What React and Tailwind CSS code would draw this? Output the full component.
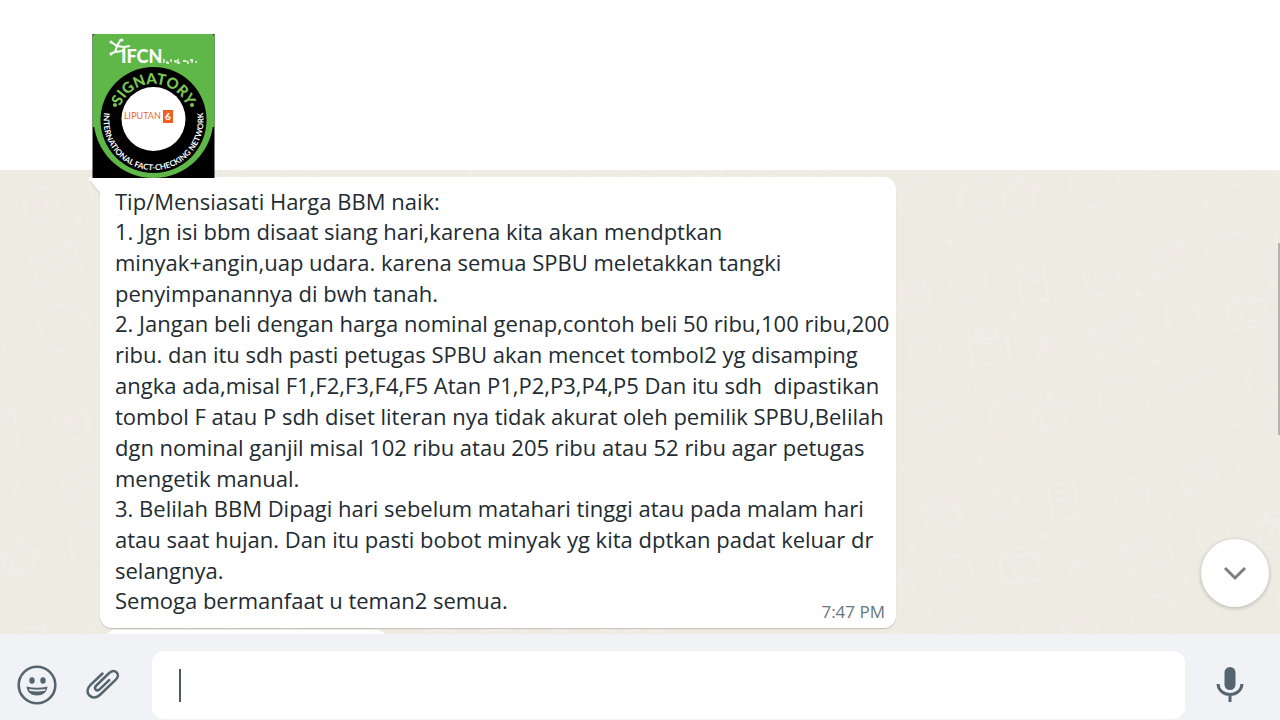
import React from 'react';

const message = [
  ['Tip/Mensiasati Harga BBM naik:'],
  [
    '1. Jgn isi bbm disaat siang hari,karena kita akan mendptkan',
    'minyak+angin,uap udara. karena semua SPBU meletakkan tangki',
    'penyimpanannya di bwh tanah.',
  ],
  [
    '2. Jangan beli dengan harga nominal genap,contoh beli 50 ribu,100 ribu,200',
    'ribu. dan itu sdh pasti petugas SPBU akan mencet tombol2 yg disamping',
    'angka ada,misal F1,F2,F3,F4,F5 Atan P1,P2,P3,P4,P5 Dan itu sdh  dipastikan',
    'tombol F atau P sdh diset literan nya tidak akurat oleh pemilik SPBU,Belilah',
    'dgn nominal ganjil misal 102 ribu atau 205 ribu atau 52 ribu agar petugas',
    'mengetik manual.',
  ],
  [
    '3. Belilah BBM Dipagi hari sebelum matahari tinggi atau pada malam hari',
    'atau saat hujan. Dan itu pasti bobot minyak yg kita dptkan padat keluar dr',
    'selangnya.',
  ],
  ['Semoga bermanfaat u teman2 semua.'],
];

const Doodles = () => (
  <svg className="absolute inset-0 h-full w-full" aria-hidden="true">
    <defs>
      <pattern id="doodles" width="260" height="220" patternUnits="userSpaceOnUse" patternTransform="rotate(-8)">
        <g fill="none" stroke="#f1ede7" strokeWidth="2" strokeLinecap="round" strokeLinejoin="round">
          <circle cx="36" cy="40" r="17" />
          <circle cx="36" cy="40" r="6" />
          <path d="M84 22l34-8 6 26-34 8z M92 28l22-5 M94 35l22-5" />
          <path d="M160 20c10-14 28-4 20 10l-14 18-18-14c-10-10 4-22 12-14z" />
          <path d="M214 18h26v36h-26z M220 26h14 M220 34h14" />
          <path d="M16 92l44-12 8 28-44 12z M24 98l32-8 M27 107l32-8" />
          <path d="M98 78c18-12 36 6 26 22s-38 6-26-22z M104 88l12 8" />
          <path d="M156 84h38v26h-38z M164 84v-8h20v8" />
          <circle cx="175" cy="97" r="7" />
          <path d="M220 82l22 32 M242 82l-22 32" />
          <path d="M20 152q20-20 40 0t-20 38q-30-10-20-38z" />
          <path d="M86 150l50-14 M88 160l50-14 M90 170l50-14" />
          <circle cx="188" cy="166" r="22" />
          <path d="M178 170q10 10 20 0 M180 158v1 M196 158v1" />
          <path d="M228 148l6 12 13 2-9 9 2 13-12-6-12 6 2-13-9-9 13-2z" />
        </g>
        <g fill="#f1eee8">
          <circle cx="70" cy="62" r="3" />
          <circle cx="136" cy="60" r="2" />
          <circle cx="204" cy="68" r="3" />
          <circle cx="78" cy="130" r="3" />
          <circle cx="148" cy="128" r="2" />
          <circle cx="72" cy="202" r="2" />
          <circle cx="150" cy="204" r="3" />
        </g>
      </pattern>
    </defs>
    <rect width="100%" height="100%" fill="url(#doodles)" />
  </svg>
);

const SignatoryBadge = () => (
  <svg
    className="absolute left-[92px] top-[34px] z-20"
    width="123"
    height="144"
    viewBox="0 0 123 144"
    role="img"
    aria-label="IFCN Signatory"
    fontFamily="Lato, 'Liberation Sans', sans-serif"
  >
    <defs>
      <path id="arc-top" d="M25.500 86a36 36 0 0 1 72 0" />
      <path id="arc-bottom" d="M13 74a50 50 0 1 0 97 0" />
    </defs>
    <path d="M.5 0h122v144H.5z" fill="#000" />
    <path d="M2 0h119l1.500 3v90H.5V3z" fill="#5fb748" />
    <circle cx="61.500" cy="84" r="60" fill="#5fb748" />
    <circle cx="61.500" cy="86" r="53" fill="#000" />
    <circle cx="61.500" cy="85" r="32" fill="#fff" />
    <g stroke="#fff" strokeWidth="2" fill="none">
      <path d="M19 8l6 4 4-7M25 12l7 1 6-1M25 12l-2 6-5 2M23 18l7-1 4-5" />
    </g>
    <g fill="#fff">
      <circle cx="19" cy="8" r="1.500" />
      <circle cx="30" cy="6" r="1.500" />
      <circle cx="19" cy="20" r="1.500" />
    </g>
    <text x="29" y="29" fontSize="18" fontWeight="900" fill="#fff">IFCN</text>
    <path d="M72 25v4M75 27v2h2M79 25v3M82 27h2v2M86 25v4h2M91 27h3v1M96 27v3M98 26h3M100 26v3M104 27v2" stroke="#fff" strokeWidth="1.300" fill="none" />
    <text fontSize="15" fontWeight="900" fill="#7cc552" textAnchor="middle">
      <textPath href="#arc-top" startOffset="50%">SIGNATORY</textPath>
    </text>
    <circle cx="23" cy="71" r="2" fill="#7cc552" />
    <circle cx="100" cy="71" r="2" fill="#7cc552" />
    <text fontSize="8" fontWeight="700" fill="#fff" textAnchor="middle">
      <textPath href="#arc-bottom" startOffset="50%">INTERNATIONAL FACT-CHECKING NETWORK</textPath>
    </text>
    <text x="32" y="85" fontSize="9" fontWeight="400" fill="#ee6a2c">LIPUTAN</text>
    <path d="M71 76h10v13H71z" fill="#ee5f20" />
    <text x="73" y="86" fontSize="10" fontWeight="900" fill="#fff">6</text>
  </svg>
);

const EmojiIcon = () => (
  <svg width="40" height="40" viewBox="0 0 40 40" aria-hidden="true">
    <circle cx="20" cy="20" r="18.300" fill="none" stroke="#54656f" strokeWidth="2.600" />
    <ellipse cx="15" cy="15.500" rx="2.700" ry="3.300" fill="#54656f" />
    <ellipse cx="26" cy="15.500" rx="2.700" ry="3.300" fill="#54656f" />
    <path d="M9.500 21.500q10.500 2.600 21 0c-.5 5.800-4.800 9-10.500 9s-10-3.200-10.500-9z" fill="#54656f" />
    <path d="M12 24q8.500 1.600 16.500 0l-.6 1.800q-7.900 1.600-15.300 0z" fill="#f0f2f5" />
  </svg>
);

const ClipIcon = () => (
  <svg width="40" height="40" viewBox="0 0 40 40" fill="none" aria-hidden="true">
    <path
      d="M19.500 8.500L7.300 20.200c-3.600 3.600-3.600 7.800-.8 10.300 2.700 2.700 7 2.700 10.300-.5l16-15.300c2.600-2.600 2.600-5.500.8-7.300s-4.800-1.900-7.400.6L13.300 20.500c-1.500 1.500-1.600 3.100-.6 4.100s2.700.9 4.100-.5l9.400-9"
      stroke="#54656f"
      strokeWidth="2.500"
      strokeLinecap="round"
      strokeLinejoin="round"
    />
  </svg>
);

const MicIcon = () => (
  <svg width="28" height="38" viewBox="0 0 28 38" fill="none" aria-hidden="true">
    <rect x="8.500" y="1" width="11" height="23" rx="5.500" fill="#54656f" />
    <path d="M2 18c.5 6.500 5.500 10.500 12 10.500S25.500 24.500 26 18M14 28.500V36" stroke="#54656f" strokeWidth="3" />
  </svg>
);

export default function App() {
  return (
    <div className="relative flex h-screen flex-col overflow-hidden bg-white font-['Open_Sans','Noto_Sans',sans-serif]">
      <header className="h-[170px] shrink-0 bg-white">
        <SignatoryBadge />
      </header>

      <main className="relative min-h-0 flex-1 overflow-hidden bg-[#eeebe3]">
        <Doodles />

        <div className="relative ml-[100px] flex max-w-[796px] flex-col pt-[7px]">
          <svg className="absolute -left-3 top-[7px]" width="24" height="20" viewBox="0 0 24 20" aria-hidden="true">
            <path d="M2 0h22v20H12V15L1 3Q0 0 2 0z" fill="#fff" />
            <path d="M2 4l10 13" stroke="#d5d3cd" />
          </svg>
          <article className="relative rounded-xl bg-white px-[15px] pt-[9px] pb-3 shadow-[0_1px_1px_#00000030]">
            <div className="-space-y-px whitespace-pre text-[22px] leading-[31px] text-[#222b32]">
              {message.map((lines) => (
                <p key={lines[0]}>{lines.join('\n')}</p>
              ))}
            </div>
            <time className="absolute bottom-[5px] right-[11px] text-[17px] leading-[22px] text-[#667781]">7:47 PM</time>
          </article>
          <div className="ml-1 mt-[2px] h-10 w-[284px] rounded-xl bg-white" />
        </div>

        <button
          type="button"
          aria-label="Scroll to bottom"
          className="absolute bottom-[27px] right-[11px] flex h-[68px] w-[68px] items-center justify-center rounded-full bg-white shadow-[0_1px_4px_#00000040]"
        >
          <svg width="24" height="16" viewBox="0 0 24 16" fill="none" aria-hidden="true">
            <path d="M2 3l10 10L22 3" stroke="#808080" strokeWidth="3" />
          </svg>
        </button>
        <div className="absolute right-0 top-[73px] h-[192px] w-[2px] bg-[#b5b3af]" />
      </main>

      <footer className="flex h-[86px] shrink-0 items-center bg-[#f0f2f5] pl-[17px] pr-9 pt-4">
        <button type="button" aria-label="Emoji" className="shrink-0">
          <EmojiIcon />
        </button>
        <button type="button" aria-label="Attach" className="ml-[26px] shrink-0">
          <ClipIcon />
        </button>
        <div className="ml-[29px] flex h-[68px] min-w-0 flex-1 items-center rounded-xl bg-white px-[27px]">
          <span className="h-[33px] w-[2px] shrink-0 bg-[#54595c]" />
          <input type="text" aria-label="Message" className="h-full w-full bg-transparent text-[22px] outline-none" />
        </div>
        <button type="button" aria-label="Record voice message" className="ml-[31px] flex h-16 shrink-0 items-center justify-center">
          <MicIcon />
        </button>
      </footer>
    </div>
  );
}
